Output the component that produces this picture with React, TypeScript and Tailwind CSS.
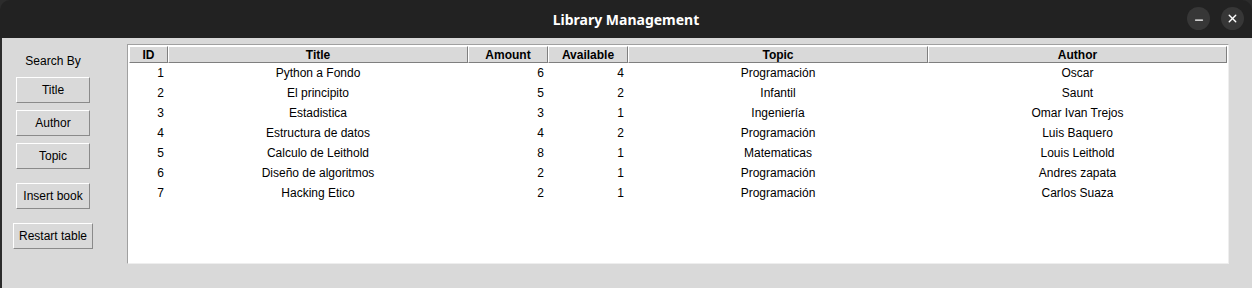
import { Minus, X } from "lucide-react";

const books = [
  { id: 1, title: "Python a Fondo", amount: 6, available: 4, topic: "Programación", author: "Oscar" },
  { id: 2, title: "El principito", amount: 5, available: 2, topic: "Infantil", author: "Saunt" },
  { id: 3, title: "Estadistica", amount: 3, available: 1, topic: "Ingeniería", author: "Omar Ivan Trejos" },
  { id: 4, title: "Estructura de datos", amount: 4, available: 2, topic: "Programación", author: "Luis Baquero" },
  { id: 5, title: "Calculo de Leithold", amount: 8, available: 1, topic: "Matematicas", author: "Louis Leithold" },
  { id: 6, title: "Diseño de algoritmos", amount: 2, available: 1, topic: "Programación", author: "Andres zapata" },
  { id: 7, title: "Hacking Etico", amount: 2, available: 1, topic: "Programación", author: "Carlos Suaza" },
];

const headers = ["ID", "Title", "Amount", "Available", "Topic", "Author"];

const TkButton = ({ label, wide }: { label: string; wide?: boolean }) => (
  <button
    className={`h-[26px] ${
      wide ? "w-[80px]" : "w-[74px]"
    } bg-[#d9d9d9] border border-t-white border-l-white border-r-[#8a8a8a] border-b-[#8a8a8a] text-[12px] leading-none text-black`}
  >
    {label}
  </button>
);

const App = () => {
  return (
    <div
      className="w-[1252px] h-[288px] bg-[#2c2c2c] flex flex-col overflow-hidden"
      style={{ fontFamily: '"Liberation Sans", Arial, sans-serif' }}
    >
      {/* Title bar */}
      <div className="relative h-[38px] shrink-0 bg-[#222222] rounded-t-[10px] flex items-center justify-center">
        <span
          className="text-white text-[14px] font-bold"
          style={{ fontFamily: '"Noto Sans", "Open Sans", sans-serif' }}
        >
          Library Management
        </span>
        <div className="absolute right-[8px] top-[7px] flex gap-[11px]">
          <div className="w-[23px] h-[23px] rounded-full bg-[#373737] flex items-center justify-center">
            <Minus size={12} strokeWidth={2.5} className="text-white mt-[3px]" />
          </div>
          <div className="w-[23px] h-[23px] rounded-full bg-[#373737] flex items-center justify-center">
            <X size={13} strokeWidth={2.5} className="text-white" />
          </div>
        </div>
      </div>

      {/* Body */}
      <div className="flex-1 ml-[2px] bg-[#d9d9d9] flex">
        {/* Search panel */}
        <div className="w-[102px] shrink-0 flex flex-col items-center pt-[16px]">
          <span className="text-[12px] leading-[14px] text-black">Search By</span>
          <div className="mt-[9px] flex flex-col items-center gap-[7px]">
            <TkButton label="Title" />
            <TkButton label="Author" />
            <TkButton label="Topic" />
          </div>
          <div className="mt-[14px] flex flex-col items-center gap-[14px]">
            <TkButton label="Insert book" />
            <TkButton label="Restart table" wide />
          </div>
        </div>

        {/* Table */}
        <div className="ml-[23px] mt-[6px] w-[1102px] h-[220px] bg-white border border-t-[#a0a0a0] border-l-[#a0a0a0] border-r-[#eeeeee] border-b-[#eeeeee] p-[1px] pb-0">
          <div className="grid grid-cols-[39px_300px_80px_80px_300px_299px] text-[12px] text-black">
            {headers.map((h) => (
              <div
                key={h}
                className="h-[17px] bg-[#d9d9d9] border border-t-white border-l-white border-r-[#7f7f7f] border-b-[#7f7f7f] flex items-center justify-center font-bold leading-none"
              >
                {h}
              </div>
            ))}
            {books.map((b) => (
              <div key={b.id} className="contents">
                <div className="h-[20px] flex items-center justify-end pr-[4px]">{b.id}</div>
                <div className="h-[20px] flex items-center justify-center">{b.title}</div>
                <div className="h-[20px] flex items-center justify-end pr-[4px]">{b.amount}</div>
                <div className="h-[20px] flex items-center justify-end pr-[4px]">{b.available}</div>
                <div className="h-[20px] flex items-center justify-center">{b.topic}</div>
                <div className="h-[20px] flex items-center justify-center">{b.author}</div>
              </div>
            ))}
          </div>
        </div>
      </div>
    </div>
  );
};

export default App;
